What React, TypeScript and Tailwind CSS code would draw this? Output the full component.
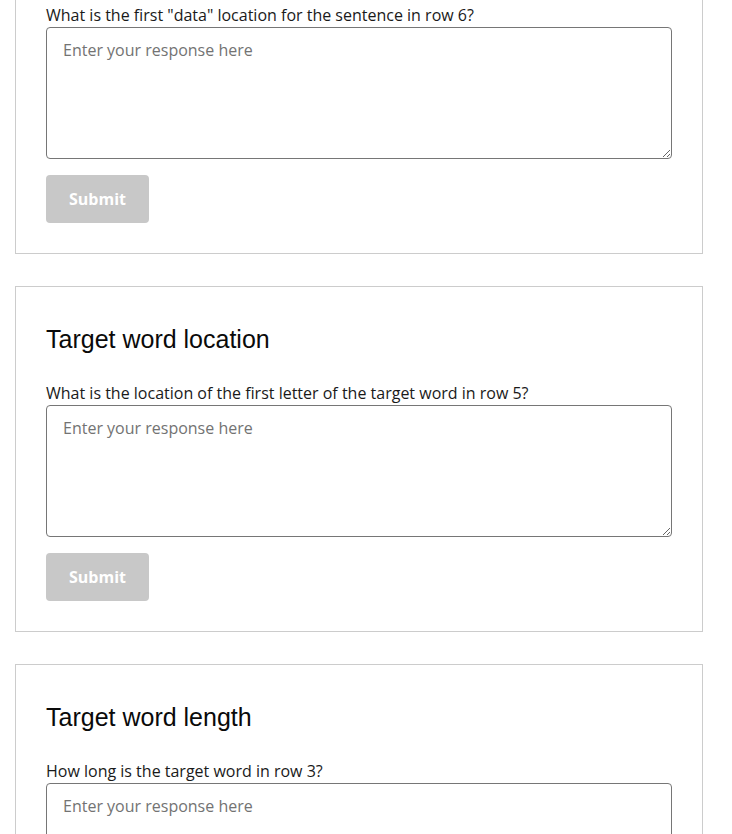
import React from "react";

type Question = {
  title: string;
  prompt: string;
};

const questions: Question[] = [
  {
    title: "Data location",
    prompt: 'What is the first "data" location for the sentence in row 6?',
  },
  {
    title: "Target word location",
    prompt: "What is the location of the first letter of the target word in row 5?",
  },
  {
    title: "Target word length",
    prompt: "How long is the target word in row 3?",
  },
];

function QuestionCard({ title, prompt }: Question) {
  return (
    <section className="border border-[#cccccc] bg-white p-[30px]">
      <h2 className="mb-[24px] mt-[4px] font-['Liberation_Sans',Arial,sans-serif] text-[25px] leading-[36px] text-[#0a0a0a]">
        {title}
      </h2>
      <label className="block text-[16px] leading-[24px] text-[#1a1a1a]">
        {prompt}
      </label>
      <textarea
        placeholder="Enter your response here"
        className="block h-[132px] w-full resize-y rounded-[4px] border border-[#767676] px-[16px] py-[10px] text-[16px] leading-[24px] text-[#222222] placeholder:text-[#737373] focus:outline-none"
      />
      <button
        type="button"
        disabled
        className="mt-[16px] h-[48px] w-[103px] rounded-[4px] bg-[#c8c8c8] text-[16px] font-bold text-white"
      >
        Submit
      </button>
    </section>
  );
}

export default function App() {
  return (
    <div className="h-[834px] overflow-hidden bg-white font-['Open_Sans',sans-serif]">
      <div className="-mt-[92px] flex w-[703px] flex-col gap-[32px] pl-[15px]">
        {questions.map((q) => (
          <QuestionCard key={q.title} {...q} />
        ))}
      </div>
    </div>
  );
}
